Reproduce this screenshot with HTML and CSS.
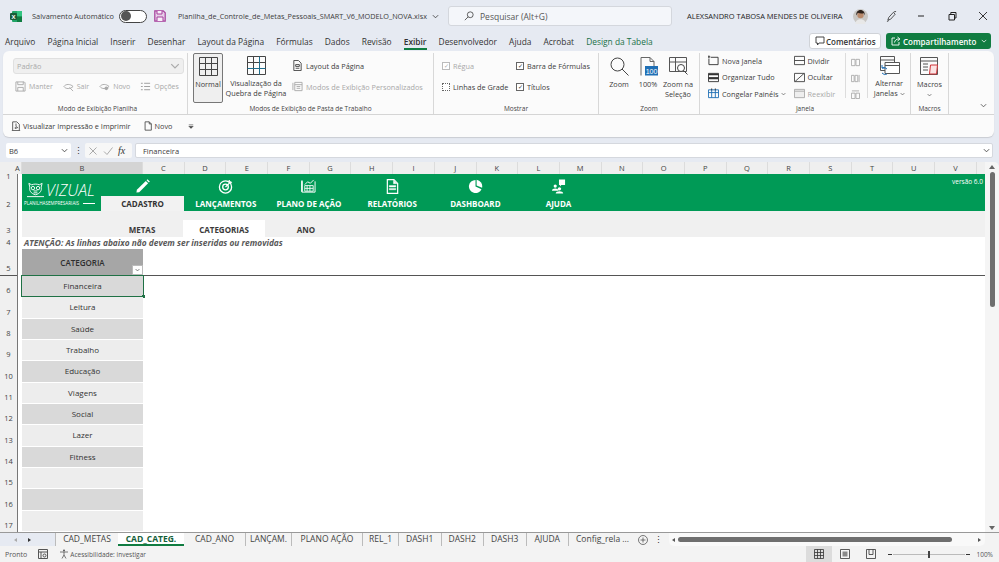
FILE: index.html
```html
<!DOCTYPE html>
<html lang="pt-BR">
<head>
  <meta charset="UTF-8" />
  <title>Planilha de Controle de Metas</title>
  <link rel="stylesheet" href="styles.css">
</head>
<body>
  <div class="app">
    <header class="titlebar">
      <svg class="logo-xl" viewBox="0 0 12 11"><rect x="2" width="10" height="11" rx="1" fill="#21a366"/><rect x="7" y="0" width="5" height="5.5" fill="#33c481"/><rect x="7" y="5.5" width="5" height="5.5" fill="#107c41"/><rect y="2" width="7" height="7" rx="1" fill="#185c37"/><text x="3.5" y="7.6" font-size="6" text-anchor="middle" fill="#fff" font-family="Liberation Sans" font-weight="700">X</text></svg>
      <span class="autosave">Salvamento Automático</span>
      <span class="toggle"><i></i></span>
      <svg class="ico save" viewBox="0 0 12 12"><path d="M.8.8h8.4l2 2v8.4H.8z" fill="#e6cfe8" stroke="#a63f9c" stroke-width="1.2"/><path d="M3 1v3h5V1M3 11V7h6v4" fill="#f7eef8" stroke="#a63f9c"/></svg>
      <span class="filename">Planilha_de_Controle_de_Metas_Pessoais_SMART_V6_MODELO_NOVA.xlsx</span>
      <svg class="ico chev" viewBox="0 0 8 5"><path d="M1 1l3 3 3-3" fill="none" stroke="#444"/></svg>
      <div class="search">
        <svg class="ico" viewBox="0 0 12 12"><circle cx="7.5" cy="4.500" r="3.500" fill="none" stroke="#444"/><path d="M5 7l-4 4" stroke="#444"/></svg>
        <span>Pesquisar (Alt+G)</span>
      </div>
      <span class="username">ALEXSANDRO TABOSA MENDES DE OLIVEIRA</span>
      <svg class="avatar" viewBox="0 0 16 16"><circle cx="8" cy="8" r="8" fill="#c9c7c4"/><path d="M2.500 16c.5-4 3-5 5.500-5s5 1 5.500 5z" fill="#e8e8e8"/><circle cx="8" cy="6.500" r="3.400" fill="#b98a6c"/><path d="M3.500 7C3 2.500 6 1 8 1s5 1.500 4.500 6l-1-2.500C9 5 7 4.800 5.200 4z" fill="#2e221c"/></svg>
      <svg class="ico pen" viewBox="0 0 12 12"><path d="M2 10l1-3 5-5.500 2 2-5 5.500zM8.500 1l2.500-.5M1 11.500l2-1" fill="none" stroke="#333" stroke-width=".9"/></svg>
      <div class="window-btns">
        <svg class="ico" viewBox="0 0 10 10"><path d="M2 5h6" stroke="#222"/></svg>
        <svg class="ico" viewBox="0 0 10 10"><path d="M2 3.500h5.500V9H2zM3.800 3.500V1.500H9v5.500H7.500" fill="none" stroke="#222"/></svg>
        <svg class="ico" viewBox="0 0 10 10"><path d="M1 1l8 8M9 1l-8 8" stroke="#222" stroke-width=".9"/></svg>
      </div>
    </header>

    <nav class="menu">
      <span>Arquivo</span>
      <span>Página Inicial</span>
      <span>Inserir</span>
      <span>Desenhar</span>
      <span>Layout da Página</span>
      <span>Fórmulas</span>
      <span>Dados</span>
      <span>Revisão</span>
      <span class="menu-active">Exibir</span>
      <span>Desenvolvedor</span>
      <span>Ajuda</span>
      <span>Acrobat</span>
      <span class="menu-green">Design da Tabela</span>
      <div class="menu-right">
        <button class="btn-comments">
          <svg class="ico" viewBox="0 0 10 10"><path d="M1 1h8v6H4L2.500 9V7H1z" fill="none" stroke="#333" stroke-width=".9"/></svg>
          Comentários
        </button>
        <button class="btn-share">
          <svg class="ico" viewBox="0 0 10 10"><path d="M4 2H1v7h7V6M3.500 6.500C4 4 5.500 3 8 3M6.500 1L9 3 6.500 5" fill="none" stroke="#fff" stroke-width=".9"/></svg>
          Compartilhamento
          <svg class="ico small-chev" viewBox="0 0 8 5"><path d="M1 1l3 3 3-3" fill="none" stroke="#fff"/></svg>
        </button>
      </div>
    </nav>

    <section class="ribbon">
      <div class="ribbon-main">
        <div class="group g-modo">
          <div class="group-body modo-body">
            <div class="fake-select">Padrão <svg class="ico" viewBox="0 0 8 5"><path d="M1 1l3 3 3-3" fill="none" stroke="#aaa"/></svg></div>
            <div class="modo-row">
              <span class="item off"><svg class="ico i11" viewBox="0 0 12 12"><path d="M1 1h9l1 1v9H1zM3 1v3h6V1M3 11V7h6v4" fill="none" stroke="#aaa"/></svg>Manter</span>
              <span class="item off"><svg class="ico i11" viewBox="0 0 12 12"><path d="M1 6c2-3 7-3 10 0-3 3-8 3-10 0z" fill="none" stroke="#aaa"/><path d="M7 7l4 4" stroke="#aaa"/></svg>Sair</span>
              <span class="item off"><svg class="ico i11" viewBox="0 0 12 12"><path d="M1 6c2-3 7-3 10 0-3 3-8 3-10 0z" fill="none" stroke="#aaa"/><circle cx="8" cy="8" r="2" fill="#aaa"/></svg>Novo</span>
              <span class="item off"><svg class="ico i11" viewBox="0 0 12 12"><path d="M1 2.500h2M1 6h2M1 9.500h2M4.500 2.500H11M4.500 6H11M4.500 9.500H11" stroke="#999"/></svg>Opções</span>
            </div>
          </div>
          <div class="group-label shift">Modo de Exibição Planilha</div>
        </div>

        <div class="group g-modos">
          <div class="group-body modos-body">
            <div class="big-btn normal">
              <svg class="big-ico" viewBox="0 0 19 19"><path d="M.5.500h18v18H.500zM.5 6.500h18M.5 12.500h18M6.500.500v18M12.500.500v18" fill="none" stroke="#444"/></svg>
              <span>Normal</span>
            </div>
            <div class="big-btn quebra">
              <svg class="big-ico" viewBox="0 0 19 19"><path d="M.5.500h18v18H.500zM.5 6.500h18M6.500.500v18" fill="none" stroke="#444"/><path d="M.5 12.500h18M12.500.500v18" fill="none" stroke="#1f6d8c"/></svg>
              <span>Visualização da<br>Quebra de Página</span>
            </div>
            <div class="stack-col">
              <span class="item"><svg class="ico i11" viewBox="0 0 12 12"><path d="M2 .500h5l3 3v8H2zM4 9h4M4 5h4v2H4z" fill="none" stroke="#444"/></svg>Layout da Página</span>
              <span class="item off"><svg class="ico i11" viewBox="0 0 12 12"><path d="M1 2v8M3 1.500h8v9H3zM3 4h8M5 6h4M5 8h4" fill="none" stroke="#aaa"/></svg>Modos de Exibição Personalizados</span>
            </div>
          </div>
          <div class="group-label">Modos de Exibição de Pasta de Trabalho</div>
        </div>

        <div class="group g-mostrar">
          <div class="group-body mostrar-body">
            <span class="check off"><i class="box on-off">✓</i>Régua</span>
            <span class="check"><i class="box">✓</i>Barra de Fórmulas</span>
            <span class="check"><i class="box blank"></i>Linhas de Grade</span>
            <span class="check"><i class="box">✓</i>Títulos</span>
          </div>
          <div class="group-label">Mostrar</div>
        </div>

        <div class="group g-zoom">
          <div class="group-body zoom-body">
            <div class="big-btn">
              <svg class="big-ico" viewBox="0 0 19 19"><circle cx="7.500" cy="7.500" r="6.500" fill="none" stroke="#444"/><path d="M12 12l6.500 6.500" stroke="#444"/></svg>
              <span>Zoom</span>
            </div>
            <div class="big-btn">
              <svg class="big-ico" viewBox="0 0 19 19"><path d="M2 18.500V.500h9l4 4v5M11 .500v4h4" fill="none" stroke="#666"/><rect x="6" y="9" width="13" height="9.500" fill="#1f6fb5"/><text x="12.500" y="16.500" font-size="7" fill="#fff" text-anchor="middle" font-family="Liberation Sans">100</text></svg>
              <span>100%</span>
            </div>
            <div class="big-btn">
              <svg class="big-ico" viewBox="0 0 19 19"><path d="M.5.500h17v14H.500zM.5 5h17M6.500.500v14" fill="none" stroke="#555"/><circle cx="12" cy="11" r="3.500" fill="#fff" stroke="#444"/><path d="M14.500 13.500l4 4" stroke="#444"/></svg>
              <span>Zoom na<br>Seleção</span>
            </div>
          </div>
          <div class="group-label">Zoom</div>
        </div>

        <div class="group g-janela">
          <div class="group-body janela-body">
            <div class="stack-col col-a">
              <span class="item"><svg class="ico i11" viewBox="0 0 12 12"><path d="M3 2.500h8v8H1V4M1 .500v3M-.5 2h3" fill="none" stroke="#333"/></svg>Nova Janela</span>
              <span class="item"><svg class="ico i11" viewBox="0 0 12 12"><path d="M.5 1.500h11v9H.500zM.5 6h11" fill="none" stroke="#333"/><path d="M.5 2h11v1.500H.500zM.5 6.500h11V8H.500z" fill="#333"/></svg>Organizar Tudo</span>
              <span class="item"><svg class="ico i11" viewBox="0 0 12 12"><path d="M.5 2h11v8.500H.500zM.5 5h11M4 2v8.500M8 2v8.500" fill="none" stroke="#1f6fb5"/><path d="M4 .500v2M8 .500v2" stroke="#333"/></svg>Congelar Painéis <svg class="ico mini" viewBox="0 0 8 5"><path d="M1 1l3 3 3-3" fill="none" stroke="#444"/></svg></span>
            </div>
            <div class="stack-col col-b">
              <span class="item"><svg class="ico i11" viewBox="0 0 12 12"><path d="M.5 1.500h11v9H.500zM.5 6h11" fill="none" stroke="#444"/></svg>Dividir</span>
              <span class="item"><svg class="ico i11" viewBox="0 0 12 12"><path d="M.5 1.500h11v9H.500zM1 10.500l10-9" fill="none" stroke="#444"/></svg>Ocultar</span>
              <span class="item off"><svg class="ico i11" viewBox="0 0 12 12"><path d="M.5 1.500h11v9H.500z" fill="#eee" stroke="#aaa"/><path d="M.5 3.500h11" stroke="#aaa"/></svg>Reexibir</span>
            </div>
            <div class="col-icons">
              <svg class="ico i9" viewBox="0 0 10 10"><path d="M.5 1.500h4v7h-4zM5.500 1.500h4v7h-4z" fill="none" stroke="#aaa"/></svg>
              <svg class="ico i9" viewBox="0 0 10 10"><path d="M.5 1.500h3v7h-3zM4.500 1.500h3v7h-3zM9 1v8" fill="none" stroke="#aaa"/></svg>
              <svg class="ico i9" viewBox="0 0 10 10"><path d="M.5 3.500h4v6h-4zM5.500 3.500h4v6h-4zM1 1h8" fill="none" stroke="#aaa"/></svg>
            </div>
            <div class="big-btn alternar">
              <svg class="big-ico wide" viewBox="0 0 21 21"><path d="M1.500.500h14v14H1.500zM1.500 4h14" fill="none" stroke="#555"/><path d="M6 6.500h14.500v11H6zM6 9.500h14.500" fill="#fff" stroke="#555"/><path d="M8 13a4 4 0 0 0-5-1M3 9v3h3M3 17a4 4 0 0 0 5 1" fill="none" stroke="#1f6fb5"/></svg>
              <span>Alternar<br>Janelas <svg class="ico mini" viewBox="0 0 8 5"><path d="M1 1l3 3 3-3" fill="none" stroke="#444"/></svg></span>
            </div>
          </div>
          <div class="group-label">Janela</div>
        </div>

        <div class="group g-macros">
          <div class="group-body macros-body">
            <div class="big-btn">
              <svg class="big-ico" viewBox="0 0 19 19"><path d="M.5.500h17v17H.500zM.5 4h17M3 7h5M3 10h5M3 13h5" fill="none" stroke="#555"/><path d="M10.500 8h7l-1 9h-7z" fill="#fbe3e3" stroke="#d13438"/></svg>
              <span>Macros<br><svg class="ico mini" viewBox="0 0 8 5"><path d="M1 1l3 3 3-3" fill="none" stroke="#444"/></svg></span>
            </div>
          </div>
          <div class="group-label">Macros</div>
        </div>

        <svg class="ico collapse" viewBox="0 0 8 5"><path d="M1 1l3 3 3-3" fill="none" stroke="#555"/></svg>
      </div>
      <div class="qat">
        <span class="item"><svg class="ico" viewBox="0 0 12 12"><path d="M1 11.500h10M2 11V1h5l3 3v7M5 9a1.500 1.500 0 0 1 3-1zM6 3v3" fill="none" stroke="#444"/></svg>Visualizar Impressão e Imprimir</span>
        <span class="item"><svg class="ico" viewBox="0 0 12 12"><path d="M2.500 1h5l2.500 2.500V11H2.500zM7.500 1v2.500H10" fill="none" stroke="#444"/></svg>Novo</span>
        <svg class="ico qat-more" viewBox="0 0 8 6"><path d="M1 .500h6M1 2.500h6L4 5.500z" fill="#444" stroke="#444" stroke-width=".6"/></svg>
      </div>
    </section>

    <div class="formula-bar">
      <div class="name-box">B6 <svg class="ico" viewBox="0 0 8 5"><path d="M1 1l3 3 3-3" fill="none" stroke="#444"/></svg></div>
      <span class="dots">⋮</span>
      <div class="fx-box">
        <svg class="ico" viewBox="0 0 10 10"><path d="M1.500 1.500l7 7M8.500 1.500l-7 7" stroke="#aaa"/></svg>
        <svg class="ico" viewBox="0 0 10 10"><path d="M1 5.500l3 3 5.500-7" fill="none" stroke="#aaa"/></svg>
        <em>fx</em>
      </div>
      <div class="fx-input">Financeira <svg class="ico" viewBox="0 0 8 5"><path d="M1 1l3 3 3-3" fill="none" stroke="#444"/></svg></div>
    </div>

    <div class="workbook">
      <div class="sheet">
        <div class="col-heads">
          <span class="corner">A</span>
          <span class="col-b-head">B</span>
          <span>C</span><span>D</span><span>E</span><span>F</span><span>G</span><span>H</span><span>I</span><span>J</span><span>K</span><span>L</span><span>M</span><span>N</span><span>O</span><span>P</span><span>Q</span><span>R</span><span>S</span><span>T</span><span>U</span><span>V</span>
        </div>
        <div class="sheet-body">
          <div class="row-heads">
            <span class="rh1">1</span>
            <span class="rh2">2</span>
            <span class="rh3">3</span>
            <span class="rh4">4</span>
            <span class="rh5">5</span>
            <span class="rh">6</span><span class="rh">7</span><span class="rh">8</span><span class="rh">9</span><span class="rh">10</span><span class="rh">11</span><span class="rh">12</span><span class="rh">13</span><span class="rh">14</span><span class="rh">15</span><span class="rh">16</span><span class="rh">17</span>
          </div>
          <div class="cells">
            <div class="banner">
              <div class="brand">
                <div class="brand-top">
                  <svg class="owl" viewBox="0 0 18 16"><path d="M2 1l3 1.500c2.500-1 5.500-1 8 0L16 1l-1 4c1 3-1 7-6 8-5-1-7-5-6-8z" fill="none" stroke="#fff"/><circle cx="6.300" cy="6" r="1.800" fill="none" stroke="#fff"/><circle cx="11.700" cy="6" r="1.800" fill="none" stroke="#fff"/><path d="M0 15h18M7 9h4M7 11h4" stroke="#fff"/></svg>
                  <span class="brand-name">VIZUAL</span>
                </div>
                <div class="brand-sub"><span>PLANILHASEMPRESARIAIS</span><i></i></div>
              </div>
              <div class="nav">
                <div class="nav-item active">
                  <div class="nav-icon"><svg viewBox="0 0 16 16"><path d="M2 11.500L11.500 2l2.500 2.500L4.500 14 1.500 14.500z" fill="#fff"/><path d="M12.300 1.200l1-1 2.500 2.500-1 1z" fill="#fff"/></svg></div>
                  <div class="nav-label">CADASTRO</div>
                </div>
                <div class="nav-item">
                  <div class="nav-icon"><svg viewBox="0 0 16 16"><circle cx="8" cy="8.500" r="6.500" fill="none" stroke="#fff" stroke-width="1.400"/><circle cx="8" cy="8.500" r="3" fill="none" stroke="#fff" stroke-width="1.400"/><path d="M8 8.500l6-6M12 1v3h3" fill="none" stroke="#fff" stroke-width="1.300"/></svg></div>
                  <div class="nav-label">LANÇAMENTOS</div>
                </div>
                <div class="nav-item">
                  <div class="nav-icon"><svg viewBox="0 0 16 16"><path d="M1 2.500v11.500h14V2.500" fill="none" stroke="#fff"/><path d="M1 1.500v12" stroke="#fff" stroke-width="1.600"/><path d="M4 7h9v6H4zM6.500 7v6M9.500 7v6M4 10h9" fill="none" stroke="#fff" stroke-width=".9"/><path d="M4 6l3-3 3 1.500 3.500-3.500" fill="none" stroke="#fff"/></svg></div>
                  <div class="nav-label">PLANO DE AÇÃO</div>
                </div>
                <div class="nav-item">
                  <div class="nav-icon"><svg viewBox="0 0 16 16"><path d="M2.500.700h7l4 4v10.600h-11z" fill="none" stroke="#fff" stroke-width="1.300"/><path d="M9 1v4h4M4.500 7h7v1.500h-7zM4.500 10h7v1.500h-7z" fill="#fff" stroke="#fff" stroke-width=".4"/></svg></div>
                  <div class="nav-label">RELATÓRIOS</div>
                </div>
                <div class="nav-item">
                  <div class="nav-icon"><svg viewBox="0 0 16 16"><path d="M8 1a7 7 0 1 0 6.400 9.800L8 8z" fill="#fff"/><path d="M9.200 .800v6l5.800 2.400A7 7 0 0 0 9.200 .800z" fill="#fff"/></svg></div>
                  <div class="nav-label">DASHBOARD</div>
                </div>
                <div class="nav-item">
                  <div class="nav-icon"><svg viewBox="0 0 16 16"><path d="M8.500 .500h6.500v6H11l-1.500 1.500V6.500h-1z" fill="#fff"/><circle cx="4.500" cy="7.500" r="1.700" fill="#fff"/><path d="M1 12.500c0-3 7-3 7 0z" fill="#fff"/><circle cx="9" cy="10.500" r="1.800" fill="#fff"/><path d="M5 15.500c0-3.200 8-3.200 8 0z" fill="#fff"/></svg></div>
                  <div class="nav-label">AJUDA</div>
                </div>
              </div>
              <span class="version">versão 6.0</span>
            </div>

            <div class="subnav">
              <div>METAS</div>
              <div class="sub-active">CATEGORIAS</div>
              <div>ANO</div>
            </div>

            <div class="warning">ATENÇÃO: As linhas abaixo não devem ser inseridas ou removidas</div>

            <div class="head-row">
              <div class="cat-head">
                CATEGORIA
                <span class="filter"><svg viewBox="0 0 8 5"><path d="M1 1l3 3 3-3" fill="none" stroke="#333"/></svg></span>
              </div>
            </div>

            <div class="table-rows">
              <div class="cat-row selected">Financeira<i class="handle"></i></div>
              <div class="cat-row">Leitura</div>
              <div class="cat-row">Saúde</div>
              <div class="cat-row">Trabalho</div>
              <div class="cat-row">Educação</div>
              <div class="cat-row">Viagens</div>
              <div class="cat-row">Social</div>
              <div class="cat-row">Lazer</div>
              <div class="cat-row">Fitness</div>
              <div class="cat-row"></div>
              <div class="cat-row"></div>
              <div class="cat-row"></div>
            </div>
          </div>
        </div>
      </div>
      <div class="vscroll">
        <span class="arrow-up"></span>
        <div class="vtrack"><div class="vthumb"></div></div>
        <span class="arrow-down"></span>
      </div>
    </div>

    <div class="tabs-bar">
      <div class="tab-nav"><span class="tab-prev"></span><span class="tab-next"></span></div>
      <div class="tab">CAD_METAS</div>
      <div class="tab tab-active">CAD_CATEG.</div>
      <div class="tab t-ano">CAD_ANO</div>
      <div class="tab t-lanc">LANÇAM.</div>
      <div class="tab t-plano">PLANO AÇÃO</div>
      <div class="tab t-rel">REL_1</div>
      <div class="tab t-dash">DASH1</div>
      <div class="tab t-dash">DASH2</div>
      <div class="tab t-dash">DASH3</div>
      <div class="tab t-dash">AJUDA</div>
      <div class="tab t-config">Config_rela ...</div>
      <svg class="add-sheet" viewBox="0 0 10 10"><circle cx="5" cy="5" r="4.500" fill="none" stroke="#444" stroke-width=".7"/><path d="M5 2.500v5M2.500 5h5" stroke="#444" stroke-width=".7"/></svg>
      <span class="dots tab-dots">⋮</span>
      <div class="hscroll">
        <span class="h-left"></span>
        <div class="hthumb"></div>
        <span class="h-right"></span>
      </div>
    </div>

    <footer class="status">
      <span>Pronto</span>
      <svg class="ico i10 st-macro" viewBox="0 0 10 10"><path d="M.5.500h9v9h-9zM.5 3h9M3 3v6.500" fill="none" stroke="#555"/><circle cx="6.500" cy="6.500" r="1.500" fill="none" stroke="#555"/></svg>
      <span class="st-access"><svg class="ico i10" viewBox="0 0 10 10"><circle cx="5" cy="1.500" r="1" fill="#555"/><path d="M1 3h8M5 3v3L3 9.500M5 6l2 3.500" fill="none" stroke="#555" stroke-width=".8"/></svg>Acessibilidade: investigar</span>
      <div class="st-right">
        <span class="view view-on"><svg class="ico i10" viewBox="0 0 10 10"><path d="M.5.500h9v9h-9zM.5 3.500h9M.5 6.500h9M3.500.500v9M6.500.500v9" fill="none" stroke="#333" stroke-width=".8"/></svg></span>
        <span class="view"><svg class="ico i10" viewBox="0 0 10 10"><path d="M.5.500h9v9h-9z" fill="none" stroke="#333" stroke-width=".8"/><path d="M2.500 2.500h5v5h-5z" fill="#888"/></svg></span>
        <span class="view"><svg class="ico i10" viewBox="0 0 10 10"><path d="M.5.500h9v9h-9zM3 .500v5h4v-5" fill="none" stroke="#333" stroke-width=".8"/></svg></span>
        <div class="slider"><i class="minus"></i><div class="track"><i class="knob"></i></div><i class="minus"></i></div>
        <span class="pct">100%</span>
      </div>
    </footer>
  </div>
</body>
</html>
```

FILE: styles.css
```css
* {
  box-sizing: border-box;
}
body {
  margin: 0;
  width: 999px;
  height: 562px;
  overflow: hidden;
  background-color: #e6eaf2;
  font-family: "Open Sans", "Noto Sans", Arial, sans-serif;
  font-size: 8px;
  color: #3c3c3c;
}
.app {
  display: flex;
  flex-direction: column;
  height: 562px;
}
.ico {
  display: inline-block;
  width: 10px;
  height: 10px;
  flex: none;
}
.i9 { width: 9px; height: 9px; }
.i10 { width: 10px; height: 10px; }
.i11 { width: 11px; height: 11px; }
.mini { width: 5px; height: 4px; }

/* title bar */
.titlebar {
  display: flex;
  align-items: center;
  height: 32px;
  padding-left: 10px;
}
.logo-xl {
  width: 12px;
  height: 11px;
}
.autosave {
  margin-left: 10px;
  width: 87px;
  white-space: nowrap;
  font-size: 7.4px;
}
.toggle {
  display: flex;
  align-items: center;
  width: 28px;
  height: 13px;
  padding-left: 1px;
  border: 1px solid #444;
  border-radius: 7px;
  background: #fff;
}
.toggle i {
  width: 10px;
  height: 10px;
  border-radius: 50%;
  background: #555;
}
.save {
  width: 12px;
  height: 12px;
  margin-left: 7px;
}
.filename {
  margin-left: 12px;
  width: 252px;
  white-space: nowrap;
  font-size: 7.25px;
}
.chev {
  width: 7px;
  height: 5px;
  margin-left: 2px;
}
.search {
  display: flex;
  align-items: center;
  gap: 6px;
  width: 224px;
  height: 20px;
  margin-left: 9px;
  padding-left: 15px;
  background: #f4f6fa;
  border: 1px solid #d4d7dd;
  border-radius: 3px;
  font-size: 8.5px;
  color: #555;
}
.username {
  margin-left: 15px;
  width: 160px;
  white-space: nowrap;
  font-size: 7.5px;
  color: #222;
}
.avatar {
  width: 15px;
  height: 15px;
  margin-left: 6px;
}
.pen {
  width: 11px;
  height: 11px;
  margin-left: 18px;
}
.window-btns {
  display: flex;
  gap: 21px;
  margin-left: 19px;
}

/* menu */
.menu {
  display: flex;
  align-items: flex-start;
  gap: 12.1px;
  height: 19px;
  padding: 3px 0 0 5px;
  font-size: 8.4px;
  color: #333;
  white-space: nowrap;
}
.menu > span {
  height: 15px;
  line-height: 13px;
}
.menu-active {
  border-bottom: 2px solid #107c41;
  font-weight: 600;
}
.menu-green {
  color: #1a7048;
}
.menu-right {
  display: flex;
  gap: 5px;
  margin-left: auto;
  margin-right: 8px;
  margin-top: -2px;
}
.menu-right button {
  display: flex;
  align-items: center;
  height: 16px;
  border-radius: 3px;
  font-family: inherit;
  font-size: 8px;
}
.btn-comments {
  gap: 1px;
  width: 72px;
  padding: 0 0 0 5px;
  background: #fff;
  border: 1px solid #d0d3d8;
  color: #333;
  font-weight: 600;
}
.btn-share {
  gap: 2px;
  width: 105px;
  padding: 0 0 0 5px;
  background: #107c41;
  border: none;
  color: #fff;
  font-weight: 600;
}
.small-chev {
  width: 6px;
  height: 4px;
  margin-left: 3px;
}

/* ribbon */
.ribbon {
  display: flex;
  flex-direction: column;
  height: 86px;
  margin: 0 5px 0 3px;
  background: #fbfbfb;
  border-radius: 6px;
  box-shadow: 0 1px 1px #c9ccd2;
}
.ribbon-main {
  display: flex;
  height: 64px;
  border-bottom: 1px solid #d5d5d5;
  position: relative;
}
.group {
  display: flex;
  flex-direction: column;
  height: 61px;
  margin-top: 2px;
  border-right: 1px solid #d8d8d8;
}
.group-body {
  flex: 1;
}
.group-label {
  height: 10px;
  line-height: 10px;
  text-align: center;
  font-size: 6.5px;
  color: #444;
  white-space: nowrap;
}
.group-label.shift {
  padding-left: 5px;
}
.g-modo { width: 185px; }
.g-modos { width: 246px; }
.g-mostrar { width: 165px; }
.g-zoom { width: 101px; }
.g-janela { width: 211px; }
.g-macros { width: 38px; }

.item {
  display: flex;
  align-items: center;
  gap: 3px;
  white-space: nowrap;
  font-size: 7.3px;
}
.off {
  color: #a8a8a8;
}
.modo-body {
  padding: 5px 4px 0 10px;
}
.fake-select {
  display: flex;
  align-items: center;
  justify-content: space-between;
  width: 171px;
  height: 16px;
  padding: 0 3px;
  background: #efefef;
  border: 1px solid #e0e0e0;
  border-radius: 3px;
  color: #aaa;
  font-size: 7.3px;
}
.modo-row {
  display: flex;
  gap: 10px;
  margin-top: 7px;
  padding-left: 2px;
}
.modo-row .item {
  font-size: 7px;
}
.big-btn {
  display: flex;
  flex-direction: column;
  align-items: center;
  text-align: center;
  font-size: 7.3px;
  line-height: 10px;
  white-space: nowrap;
}
.big-ico {
  width: 19px;
  height: 19px;
  margin-bottom: 3px;
}
.big-ico.wide {
  width: 21px;
  height: 21px;
  margin-bottom: 1px;
}
.modos-body {
  display: flex;
  padding-left: 5px;
}
.normal {
  width: 30px;
  height: 50px;
  padding-top: 3px;
  background: #efefef;
  border: 1px solid #777;
  border-radius: 2px;
}
.quebra {
  width: 66px;
  padding-top: 3px;
}
.stack-col {
  display: flex;
  flex-direction: column;
}
.modos-body .stack-col {
  gap: 10px;
  margin-left: 3px;
  padding-top: 7px;
}
.mostrar-body {
  display: grid;
  grid-template-columns: 74px 1fr;
  grid-auto-rows: 21px;
  padding: 7px 0 0 8px;
}
.check {
  display: flex;
  align-items: center;
  gap: 3px;
  font-size: 7.3px;
  white-space: nowrap;
  height: 11px;
}
.box {
  display: flex;
  align-items: center;
  justify-content: center;
  width: 8px;
  height: 8px;
  border: 1px solid #666;
  background: #fff;
  font-style: normal;
  font-size: 6px;
  line-height: 1;
  color: #333;
}
.box.on-off {
  border-color: #bbb;
  color: #aaa;
}
.box.blank {
  border-style: dotted;
}
.zoom-body {
  display: flex;
  padding: 4px 0 0 10px;
}
.zoom-body .big-btn:nth-child(1) { width: 20px; }
.zoom-body .big-btn:nth-child(2) { width: 20px; margin-left: 9px; }
.zoom-body .big-btn:nth-child(3) { width: 32px; margin-left: 4px; }
.janela-body {
  display: flex;
  padding-left: 8px;
}
.col-a {
  gap: 5.5px;
  width: 86px;
  padding-top: 2px;
}
.col-a .item, .col-b .item {
  height: 11px;
}
.col-b {
  gap: 5.5px;
  width: 52px;
  padding-top: 2px;
}
.col-icons {
  display: flex;
  flex-direction: column;
  gap: 7px;
  width: 23px;
  height: 45px;
  padding: 5px 0 0 5px;
  border-left: 1px solid #ddd;
  border-right: 1px solid #ddd;
}
.alternar {
  width: 42px;
  padding-top: 3px;
}
.macros-body {
  display: flex;
  justify-content: center;
  padding-top: 4px;
}
.collapse {
  position: absolute;
  right: 7px;
  bottom: 6px;
  width: 7px;
  height: 5px;
}
.qat {
  display: flex;
  align-items: center;
  gap: 12px;
  height: 22px;
  padding-left: 8px;
}
.qat .item {
  gap: 2px;
}
.qat-more {
  width: 6px;
  height: 5px;
  margin-left: 4px;
}

/* formula bar */
.formula-bar {
  display: flex;
  align-items: center;
  height: 15px;
  margin: 6px 6px 4px 6px;
}
.name-box {
  display: flex;
  align-items: center;
  justify-content: space-between;
  width: 65px;
  height: 15px;
  padding: 0 3px;
  background: #fff;
  border-radius: 2px;
  font-size: 7.5px;
}
.name-box .ico, .fx-input .ico {
  width: 7px;
  height: 5px;
}
.dots {
  width: 14px;
  text-align: center;
  font-size: 9px;
  line-height: 1;
  color: #333;
}
.fx-box {
  display: flex;
  align-items: center;
  gap: 5px;
  width: 47px;
  height: 15px;
  padding-left: 3px;
  background: #f7f7f7;
  border-radius: 2px;
}
.fx-box em {
  font-family: "Liberation Serif", serif;
  font-size: 10px;
  color: #333;
}
.fx-input {
  display: flex;
  align-items: center;
  justify-content: space-between;
  flex: 1;
  height: 15px;
  margin-left: 3px;
  padding: 0 2px 0 7px;
  background: #fff;
  border: 1px solid #d5d8de;
  border-radius: 2px;
  font-size: 7.5px;
}

/* sheet */
.workbook {
  display: flex;
  height: 370px;
}
.sheet {
  width: 985px;
}
.col-heads {
  display: grid;
  grid-template-columns: 22px 121px repeat(20, 41.7px);
  height: 12px;
  background: #efefef;
  overflow: hidden;
  font-size: 7.5px;
  line-height: 12px;
  text-align: center;
  color: #444;
}
.col-heads span {
  border-right: 1px solid #dcdcdc;
}
.col-heads .corner {
  padding-left: 15px;
  text-align: left;
}
.col-heads .col-b-head {
  background: #d4d4d4;
}
.sheet-body {
  display: flex;
  height: 358px;
  background: #fff;
}
.row-heads {
  display: flex;
  flex-direction: column;
  width: 18px;
  background: #f0f0f0;
  border-right: 1px solid #777;
  text-align: center;
  font-size: 7.5px;
  line-height: 10px;
  color: #444;
}
.row-heads span {
  display: flex;
  align-items: flex-end;
  justify-content: center;
  padding-bottom: 2px;
}
.rh1 { height: 9px; flex: none; }
.rh2 { height: 28px; flex: none; }
.rh3 { height: 26px; flex: none; }
.rh4 { height: 12px; flex: none; }
.rh5 { height: 27px; flex: none; border-bottom: 1px solid #555; }
.rh { height: 21.33px; flex: none; }
.cells {
  flex: 1;
  padding-left: 4px;
}
.banner {
  display: flex;
  position: relative;
  height: 37px;
  background: #009a56;
  color: #fff;
}
.brand {
  width: 79px;
  padding: 7px 0 0 2px;
}
.brand-top {
  display: flex;
  align-items: center;
  gap: 2px;
  height: 18px;
  padding-left: 3px;
}
.owl {
  width: 17px;
  height: 16px;
}
.brand-name {
  font-family: "Open Sans", Arial, sans-serif;
  font-size: 16px;
  font-style: italic;
  font-weight: 300;
  line-height: 1;
}
.brand-sub {
  display: flex;
  align-items: center;
  gap: 4px;
  margin-top: 1px;
  font-size: 4.6px;
  white-space: nowrap;
}
.brand-sub i {
  width: 12px;
  height: 1px;
  background: #fff;
}
.nav {
  display: grid;
  grid-template-columns: repeat(6, 83.2px);
}
.nav-item {
  display: flex;
  flex-direction: column;
  align-items: center;
}
.nav-icon {
  display: flex;
  align-items: center;
  justify-content: center;
  height: 22px;
  padding-top: 2px;
}
.nav-icon svg {
  width: 15px;
  height: 15px;
}
.nav-label {
  width: 100%;
  height: 15px;
  line-height: 15px;
  text-align: center;
  font-size: 8px;
  font-weight: 700;
}
.active .nav-label {
  background: #f2f2f2;
  color: #333;
}
.version {
  position: absolute;
  top: 3px;
  right: 2px;
  font-size: 6.5px;
  line-height: 9px;
}
.subnav {
  display: grid;
  grid-template-columns: repeat(3, 82px);
  height: 26px;
  padding: 9px 0 0 79px;
  background: #f0f0f0;
  font-size: 8px;
  font-weight: 700;
  line-height: 19px;
  text-align: center;
  color: #3a3a3a;
}
.sub-active {
  background: #fff;
}
.warning {
  height: 12px;
  padding-left: 2px;
  font-size: 8.35px;
  font-weight: 700;
  font-style: italic;
  line-height: 12px;
  color: #595959;
  white-space: nowrap;
}
.head-row {
  height: 27px;
  border-bottom: 1px solid #555;
}
.cat-head {
  position: relative;
  width: 121px;
  height: 26px;
  background: #a6a6a6;
  text-align: center;
  line-height: 28px;
  font-size: 8px;
  font-weight: 600;
  color: #2e2e2e;
}
.filter {
  position: absolute;
  right: 0;
  bottom: 0;
  display: flex;
  align-items: center;
  justify-content: center;
  width: 11px;
  height: 10px;
  background: #fff;
  border: 1px solid #bbb;
}
.filter svg {
  width: 5px;
  height: 4px;
}
.table-rows {
  display: grid;
  grid-template-rows: repeat(12, 21.33px);
  width: 121px;
}
.cat-row {
  position: relative;
  margin-bottom: 1px;
  background: #ededed;
  text-align: center;
  font-size: 8px;
  line-height: 20px;
  color: #333;
}
.cat-row:nth-child(odd) {
  background: #d9d9d9;
}
.cat-row.selected {
  outline: 1.5px solid #1f7145;
}
.handle {
  position: absolute;
  right: -2px;
  bottom: -2px;
  width: 3px;
  height: 3px;
  background: #1f7145;
}
.vscroll {
  display: flex;
  flex-direction: column;
  align-items: center;
  width: 14px;
  background: #f5f5f5;
  border-radius: 0 5px 0 0;
}
.arrow-up, .arrow-down {
  width: 0;
  height: 0;
  flex: none;
  border-left: 3px solid transparent;
  border-right: 3px solid transparent;
}
.arrow-up {
  margin-top: 3px;
  border-bottom: 4px solid #666;
}
.arrow-down {
  margin-bottom: 2px;
  border-top: 4px solid #666;
}
.vtrack {
  flex: 1;
  margin-top: 3px;
}
.vthumb {
  width: 5px;
  height: 135px;
  border-radius: 3px;
  background: #6e6e6e;
}

/* sheet tabs */
.tabs-bar {
  display: flex;
  align-items: stretch;
  height: 14px;
  background: #f3f3f3;
  border-top: 1px solid #999;
  font-size: 8.5px;
  color: #444;
}
.tab-nav {
  display: flex;
  align-items: center;
  gap: 11px;
  width: 55px;
  padding-left: 14px;
  background: #e6eaf2;
}
.tab-prev {
  border-right: 3px solid #aaa;
  border-top: 2.5px solid transparent;
  border-bottom: 2.5px solid transparent;
}
.tab-next {
  border-left: 3px solid #333;
  border-top: 2.5px solid transparent;
  border-bottom: 2.5px solid transparent;
}
.tab {
  width: 63px;
  text-align: center;
  line-height: 12px;
  border-left: 1px solid #bbb;
  white-space: nowrap;
}
.tab-active {
  width: 66px;
  background: #fff;
  border-left: none;
  border-bottom: 2px solid #107c41;
  color: #14603a;
  font-weight: 700;
}
.t-ano { width: 61px; border-left: none; }
.t-lanc { width: 46px; }
.t-plano { width: 71px; }
.t-rel { width: 36px; }
.t-dash { width: 42.5px; }
.t-config { width: 68px; }
.add-sheet {
  width: 10px;
  height: 10px;
  margin: 2px 0 0 2px;
}
.tab-dots {
  width: 21px;
  line-height: 13px;
}
.hscroll {
  display: flex;
  align-items: center;
  flex: 1;
  margin-right: 14px;
  padding: 0 4px 0 3px;
  background: #f9f9f9;
  border-radius: 0 0 5px 5px;
}
.h-left {
  border-right: 3px solid #555;
  border-top: 2.5px solid transparent;
  border-bottom: 2.5px solid transparent;
}
.hthumb {
  width: 274px;
  height: 5px;
  flex: none;
  margin-left: 3px;
  border-radius: 3px;
  background: #6e6e6e;
}
.h-right {
  margin-left: auto;
  border-left: 3px solid #555;
  border-top: 2.5px solid transparent;
  border-bottom: 2.5px solid transparent;
}

/* status bar */
.status {
  display: flex;
  align-items: center;
  height: 16px;
  padding-left: 5px;
  background: #f3f3f3;
  font-size: 7px;
  color: #555;
}
.st-macro {
  margin-left: 11px;
}
.st-access {
  display: flex;
  align-items: center;
  gap: 1px;
  margin-left: 11px;
  font-size: 6.5px;
}
.st-right {
  display: flex;
  align-items: center;
  margin-left: auto;
  height: 16px;
  padding-right: 6px;
}
.view {
  display: flex;
  align-items: center;
  justify-content: center;
  width: 26px;
  height: 16px;
}
.view-on {
  background: #dcdcdc;
}
.slider {
  display: flex;
  align-items: center;
  gap: 1px;
  margin-left: 4px;
}
.minus {
  width: 4px;
  height: 1px;
  background: #333;
}
.track {
  position: relative;
  width: 72px;
  height: 1px;
  background: #bbb;
}
.knob {
  position: absolute;
  left: 35px;
  top: -3px;
  width: 2px;
  height: 7px;
  background: #444;
}
.pct {
  width: 18px;
  margin-left: 5px;
  text-align: right;
  font-size: 6.5px;
}
```
